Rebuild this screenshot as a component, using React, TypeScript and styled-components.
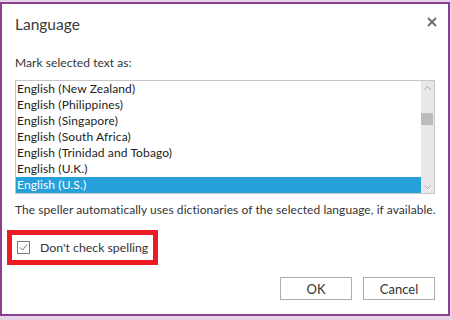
import React from "react";
import styled, { createGlobalStyle } from "styled-components";

const Global = createGlobalStyle`
  html, body { margin: 0; padding: 0; }
  body {
    background: #e6d2e7;
    width: 452px;
    height: 320px;
    overflow: hidden;
    font-family: "Lato", "Liberation Sans", sans-serif;
    color: #333333;
  }
  * { box-sizing: border-box; }
`;

const Dialog = styled.div`
  margin-top: 2px;
  width: 450px;
  height: 314px;
  background: #ffffff;
  border: 2px solid #8c3f8f;
  padding: 0 13px;
  display: flex;
  flex-direction: column;
`;

const Header = styled.div`
  display: flex;
  align-items: flex-start;
  justify-content: space-between;
  height: 38px;
  padding-top: 10px;
`;

const Title = styled.h1`
  margin: 0;
  font-size: 15.5px;
  line-height: 20px;
  font-weight: 400;
  color: #3a3a3a;
`;

const CloseButton = styled.button`
  border: 0;
  background: transparent;
  padding: 0;
  width: 10px;
  height: 10px;
  margin-top: 3px;
  margin-right: -2px;
  display: flex;
  cursor: pointer;
`;

const Label = styled.div`
  margin-top: 13px;
  font-size: 12px;
  line-height: 16px;
  letter-spacing: 0.06px;
`;

const ListBox = styled.div`
  margin-top: 9px;
  height: 114px;
  border: 1px solid #c6c6c6;
  display: flex;
`;

const Options = styled.ul`
  list-style: none;
  margin: 0;
  padding: 0;
  flex: 1;
`;

const Option = styled.li<{ $selected?: boolean }>`
  height: 16px;
  line-height: 16px;
  font-size: 12px;
  letter-spacing: 0.12px;
  padding-left: 1px;
  color: ${(p) => (p.$selected ? "#ffffff" : "#222222")};
  background: ${(p) => (p.$selected ? "#26a0da" : "transparent")};
  white-space: nowrap;
`;

const ScrollBar = styled.div`
  width: 13px;
  background: #e8e8e8;
  display: flex;
  flex-direction: column;
  align-items: center;
`;

const ArrowCell = styled.div`
  height: 13px;
  width: 13px;
  display: flex;
  align-items: center;
  justify-content: center;
`;

const Track = styled.div`
  flex: 1;
  width: 13px;
  padding-top: 19px;
`;

const Thumb = styled.div`
  width: 12px;
  height: 12px;
  background: #bcbcbc;
`;

const Description = styled.p`
  margin: 8px 0 0;
  font-size: 12px;
  line-height: 16px;
  letter-spacing: 0.06px;
  white-space: nowrap;
`;

const Highlight = styled.div`
  margin-top: 12px;
  margin-left: -8px;
  width: 151px;
  height: 35px;
  border: 5px solid #ed1c24;
  display: flex;
  align-items: center;
  padding-left: 5px;
  gap: 10px;
`;

const CheckLabel = styled.label`
  font-size: 12.3px;
  line-height: 16px;
  color: #333333;
  white-space: nowrap;
`;

const Footer = styled.div`
  margin-top: 12px;
  display: flex;
  justify-content: flex-end;
  gap: 11px;
`;

const Button = styled.button`
  width: 72px;
  height: 23px;
  border: 1px solid #adadad;
  background: #ffffff;
  font-family: inherit;
  font-size: 13px;
  color: #333333;
  padding: 0;
`;

const options = [
  "English (New Zealand)",
  "English (Philippines)",
  "English (Singapore)",
  "English (South Africa)",
  "English (Trinidad and Tobago)",
  "English (U.K.)",
  "English (U.S.)",
];

export default function App() {
  return (
    <>
      <Global />
      <Dialog>
        <Header>
          <Title>Language</Title>
          <CloseButton aria-label="Close">
            <svg width="10" height="10" viewBox="0 0 10 10">
              <path d="M1 1 L9 9 M9 1 L1 9" stroke="#6b6b6b" strokeWidth="1.8" />
            </svg>
          </CloseButton>
        </Header>
        <Label>Mark selected text as:</Label>
        <ListBox>
          <Options>
            {options.map((o, i) => (
              <Option key={o} $selected={i === options.length - 1}>
                {o}
              </Option>
            ))}
          </Options>
          <ScrollBar>
            <ArrowCell>
              <svg width="7" height="4" viewBox="0 0 7 4">
                <path d="M0.5 3.5 L3.5 0.5 L6.5 3.5" fill="none" stroke="#a6a6a6" strokeWidth="1" />
              </svg>
            </ArrowCell>
            <Track>
              <Thumb />
            </Track>
            <ArrowCell>
              <svg width="7" height="4" viewBox="0 0 7 4">
                <path d="M0.5 0.5 L3.5 3.5 L6.5 0.5" fill="none" stroke="#a6a6a6" strokeWidth="1" />
              </svg>
            </ArrowCell>
          </ScrollBar>
        </ListBox>
        <Description>
          The speller automatically uses dictionaries of the selected language, if available.
        </Description>
        <Highlight>
          <svg width="13" height="13" viewBox="0 0 13 13">
            <rect x="0.5" y="0.5" width="12" height="12" fill="#fff" stroke="#7a7a7a" />
            <path d="M3 6.5 L5.5 9 L10 3.5" fill="none" stroke="#7a7a7a" strokeWidth="1" />
          </svg>
          <CheckLabel>Don't check spelling</CheckLabel>
        </Highlight>
        <Footer>
          <Button>OK</Button>
          <Button>Cancel</Button>
        </Footer>
      </Dialog>
    </>
  );
}
